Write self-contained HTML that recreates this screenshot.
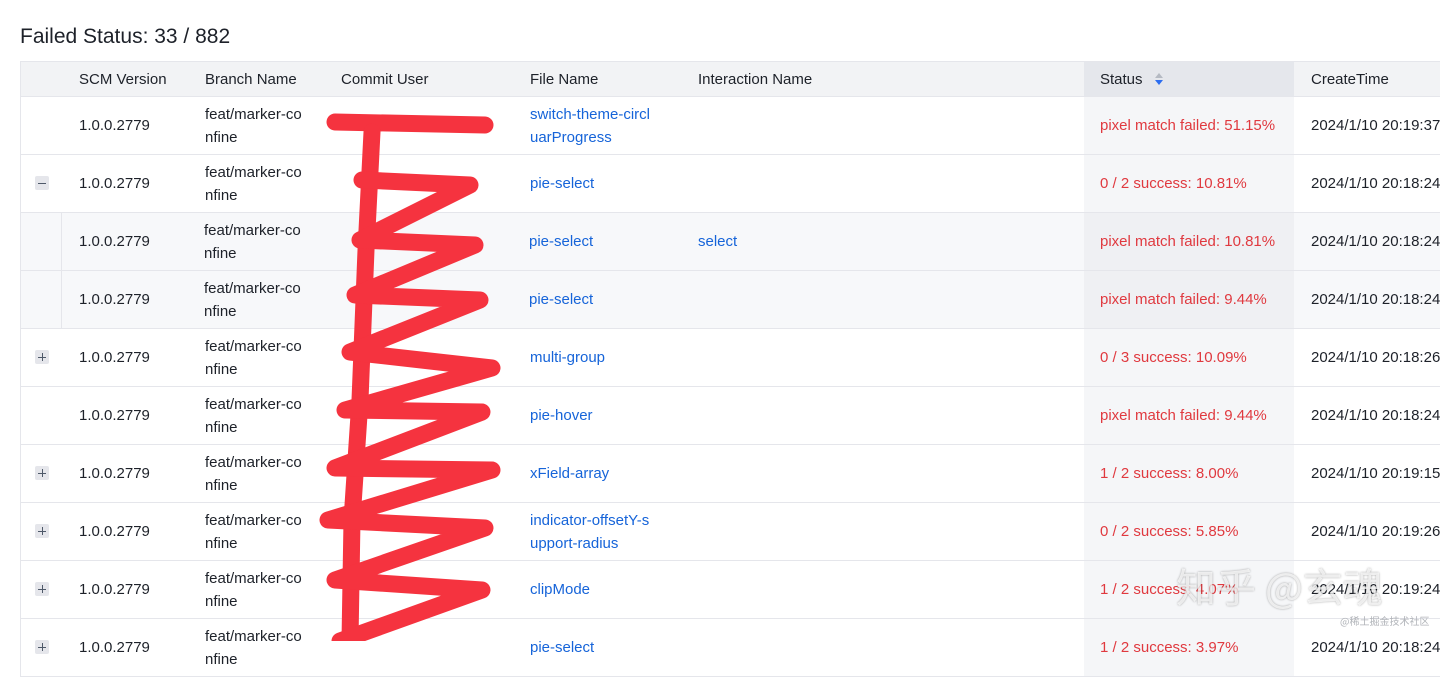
<!DOCTYPE html>
<html><head><meta charset="utf-8"><style>
body{margin:0;width:1440px;height:641px;overflow:hidden;background:#fff;font-family:"Liberation Sans","Noto Sans CJK SC",sans-serif;color:#1d2129;position:relative}
h1{position:absolute;left:20px;top:25px;margin:0;font-size:21px;font-weight:normal;color:#1d2129}
.tbl{position:absolute;left:20px;top:61px;width:1440px;border-top:1px solid #e5e6eb;border-left:1px solid #e5e6eb}
.row{position:relative;height:57px;border-bottom:1px solid #e5e6eb;font-size:15px}
.hd{height:34px;background:#f2f3f5}
.c{position:absolute;top:0;height:100%;display:flex;align-items:center;line-height:23px}
.st{position:absolute;left:1063px;width:210px;top:0;height:100%;background:#f5f6f8}
.hd .st{background:#e5e7ec}
.sub{background:#f7f8fa}
.sub .st{background:#eff0f3}
.sub:before{content:"";position:absolute;left:40px;top:0;bottom:-1px;border-left:1px solid #e5e6eb}
a{color:#1664d9;text-decoration:none}
.r{color:#e0393f}
.ex{position:absolute;left:14px;top:21px;width:14px;height:14px;background:#e5e6eb;border-radius:2px}
.ex:before{content:"";position:absolute;left:3px;top:6.5px;width:8px;height:1px;background:#4e5969}
.ex.p:after{content:"";position:absolute;left:6.5px;top:3px;width:1px;height:8px;background:#4e5969}
</style></head><body>
<h1>Failed Status: 33 / 882</h1>
<div class="tbl">
<div class="row hd"><div class="st"></div>
<div class="c" style="left:58px">SCM Version</div><div class="c" style="left:184px">Branch Name</div><div class="c" style="left:320px">Commit User</div><div class="c" style="left:509px">File Name</div><div class="c" style="left:677px">Interaction Name</div>
<div class="c" style="left:1079px">Status <svg width="12" height="16" style="margin-left:10px" viewBox="0 0 12 16"><path d="M6 2L10 7H2z" fill="#b5bac3"/><path d="M6 14L10 9H2z" fill="#2d6ef0"/></svg></div>
<div class="c" style="left:1290px">CreateTime</div></div>

<div class="row"><div class="st"></div><div class="c" style="left:58px">1.0.0.2779</div><div class="c" style="left:184px">feat/marker-co<br>nfine</div><div class="c" style="left:509px"><a>switch-theme-circl<br>uarProgress</a></div><div class="c r" style="left:1079px">pixel match failed: 51.15%</div><div class="c" style="left:1290px;white-space:nowrap">2024/1/10 20:19:37</div></div>

<div class="row"><div class="ex"></div><div class="st"></div><div class="c" style="left:58px">1.0.0.2779</div><div class="c" style="left:184px">feat/marker-co<br>nfine</div><div class="c" style="left:509px"><a>pie-select</a></div><div class="c r" style="left:1079px">0 / 2 success: 10.81%</div><div class="c" style="left:1290px;white-space:nowrap">2024/1/10 20:18:24</div></div>

<div class="row sub"><div class="st"></div><div class="c" style="left:58px">1.0.0.2779</div><div class="c" style="left:183px">feat/marker-co<br>nfine</div><div class="c" style="left:508px"><a>pie-select</a></div><div class="c" style="left:677px"><a>select</a></div><div class="c r" style="left:1079px">pixel match failed: 10.81%</div><div class="c" style="left:1290px;white-space:nowrap">2024/1/10 20:18:24</div></div>

<div class="row sub"><div class="st"></div><div class="c" style="left:58px">1.0.0.2779</div><div class="c" style="left:183px">feat/marker-co<br>nfine</div><div class="c" style="left:508px"><a>pie-select</a></div><div class="c r" style="left:1079px">pixel match failed: 9.44%</div><div class="c" style="left:1290px;white-space:nowrap">2024/1/10 20:18:24</div></div>

<div class="row"><div class="ex p"></div><div class="st"></div><div class="c" style="left:58px">1.0.0.2779</div><div class="c" style="left:184px">feat/marker-co<br>nfine</div><div class="c" style="left:509px"><a>multi-group</a></div><div class="c r" style="left:1079px">0 / 3 success: 10.09%</div><div class="c" style="left:1290px;white-space:nowrap">2024/1/10 20:18:26</div></div>

<div class="row"><div class="st"></div><div class="c" style="left:58px">1.0.0.2779</div><div class="c" style="left:184px">feat/marker-co<br>nfine</div><div class="c" style="left:509px"><a>pie-hover</a></div><div class="c r" style="left:1079px">pixel match failed: 9.44%</div><div class="c" style="left:1290px;white-space:nowrap">2024/1/10 20:18:24</div></div>

<div class="row"><div class="ex p"></div><div class="st"></div><div class="c" style="left:58px">1.0.0.2779</div><div class="c" style="left:184px">feat/marker-co<br>nfine</div><div class="c" style="left:509px"><a>xField-array</a></div><div class="c r" style="left:1079px">1 / 2 success: 8.00%</div><div class="c" style="left:1290px;white-space:nowrap">2024/1/10 20:19:15</div></div>

<div class="row"><div class="ex p"></div><div class="st"></div><div class="c" style="left:58px">1.0.0.2779</div><div class="c" style="left:184px">feat/marker-co<br>nfine</div><div class="c" style="left:509px"><a>indicator-offsetY-s<br>upport-radius</a></div><div class="c r" style="left:1079px">0 / 2 success: 5.85%</div><div class="c" style="left:1290px;white-space:nowrap">2024/1/10 20:19:26</div></div>

<div class="row"><div class="ex p"></div><div class="st"></div><div class="c" style="left:58px">1.0.0.2779</div><div class="c" style="left:184px">feat/marker-co<br>nfine</div><div class="c" style="left:509px"><a>clipMode</a></div><div class="c r" style="left:1079px">1 / 2 success: 4.07%</div><div class="c" style="left:1290px;white-space:nowrap">2024/1/10 20:19:24</div></div>

<div class="row"><div class="ex p"></div><div class="st"></div><div class="c" style="left:58px">1.0.0.2779</div><div class="c" style="left:184px">feat/marker-co<br>nfine</div><div class="c" style="left:509px"><a>pie-select</a></div><div class="c r" style="left:1079px">1 / 2 success: 3.97%</div><div class="c" style="left:1290px;white-space:nowrap">2024/1/10 20:18:24</div></div>
</div>

<svg style="position:absolute;left:0;top:0" width="1440" height="641">
<g fill="none" stroke="#f5333f" stroke-width="17" stroke-linecap="round" stroke-linejoin="round">
<path d="M335 122 L485 125"/>
<path d="M372 132 L366 250 L360 400 L352 520 L350 641"/>
<path d="M362 180 L470 185 L360 240 L475 245 L355 295 L480 300 L350 352 L492 368 L345 410 L482 412 L335 468 L492 470 L328 520 L485 528 L335 580 L482 590 L340 641"/>
</g></svg>
<div style="position:absolute;left:1176px;top:556px;font-size:40px;color:rgba(255,255,255,0.75);text-shadow:0 0 2px rgba(0,0,0,0.35);font-family:'Noto Sans CJK SC',sans-serif">知乎 @玄魂</div>
<div style="position:absolute;left:1340px;top:613px;font-size:10px;color:#b0b3b8;font-family:'Noto Sans CJK SC',sans-serif">@稀土掘金技术社区</div>
</body></html>
